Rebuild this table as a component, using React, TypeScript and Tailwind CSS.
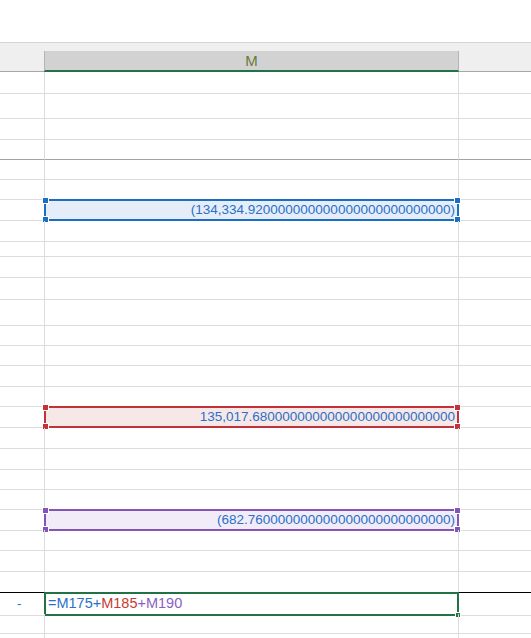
import React from "react";

type Sel = "blue" | "red" | "purple" | "active";

type Row = {
  bottom: number;
  sel?: Sel;
  text?: string;
  dark?: boolean;
  blackEdge?: boolean;
  dash?: boolean;
};

const Z = "0000000000000000000000000";

const ROWS: Row[] = [
  { bottom: 93 },
  { bottom: 118 },
  { bottom: 139 },
  { bottom: 159, dark: true },
  { bottom: 179 },
  { bottom: 199 },
  { bottom: 220, sel: "blue", text: "(134,334.92" + Z + ")" },
  { bottom: 241 },
  { bottom: 256 },
  { bottom: 277 },
  { bottom: 299 },
  { bottom: 325 },
  { bottom: 345 },
  { bottom: 365 },
  { bottom: 386 },
  { bottom: 406 },
  { bottom: 427, sel: "red", text: "135,017.68" + Z },
  { bottom: 448 },
  { bottom: 469 },
  { bottom: 489 },
  { bottom: 509 },
  { bottom: 529, sel: "purple", text: "(682.76" + Z + ")" },
  { bottom: 550 },
  { bottom: 571 },
  { bottom: 592, blackEdge: true },
  { bottom: 613, sel: "active", dash: true },
  { bottom: 633 },
  { bottom: 638 },
];

const SEL_STYLE: Record<Sel, { fill: string; box: string; handle: string }> = {
  blue: { fill: "bg-[#e5eef8]", box: "border-[#1b6ec2]", handle: "bg-[#1b6ec2]" },
  red: { fill: "bg-[#f7e8e8]", box: "border-[#c2323b]", handle: "bg-[#c2323b]" },
  purple: { fill: "bg-[#f1ecf7]", box: "border-[#8156b6]", handle: "bg-[#8156b6]" },
  active: { fill: "bg-white", box: "border-[#217346]", handle: "bg-[#217346]" },
};

function Handle({ pos, color }: { pos: string; color: string }) {
  return <span className={`absolute w-[7px] h-[7px] border border-white ${color} ${pos}`} />;
}

function Selection({ kind }: { kind: Sel }) {
  const s = SEL_STYLE[kind];
  if (kind === "active") {
    return (
      <div className={`absolute -top-px -bottom-px -left-px -right-px border-2 ${s.box}`}>
        <span className={`absolute -right-[4px] -bottom-[4px] w-[6px] h-[6px] border border-white ${s.handle}`} />
      </div>
    );
  }
  return (
    <div className={`absolute -top-px -bottom-px -left-px -right-px border-2 ${s.box}`}>
      <Handle pos="-left-[4px] -top-[4px]" color={s.handle} />
      <Handle pos="-right-[4px] -top-[4px]" color={s.handle} />
      <Handle pos="-left-[4px] -bottom-[4px]" color={s.handle} />
      <Handle pos="-right-[4px] -bottom-[4px]" color={s.handle} />
    </div>
  );
}

export default function App() {
  let prev = 71;
  return (
    <div className="w-[531px] h-[638px] overflow-hidden bg-white text-[13.5px] text-[#2a70c8]" style={{ fontFamily: '"Liberation Sans", Arial, sans-serif' }}>
      <div className="h-[42px]" />

      {/* column headers */}
      <div className="h-[30px] bg-[#efefef] border-t border-b border-t-[#d4d4d4] border-b-[#a6a6a6] grid grid-cols-[44px_415px_1fr]">
        <div />
        <div className="mt-[8px] h-[21px] -mb-px bg-[#d2d2d2] border-x border-[#b4b4b4] border-b-2 border-b-[#217346] flex items-center justify-center pt-px text-[15px] text-[#6a7a38]">
          M
        </div>
        <div />
      </div>

      {ROWS.map((r, i) => {
        const h = r.bottom - prev;
        prev = r.bottom;
        const line = r.dark ? "border-b-[#a3a3a3]" : "border-b-[#dcdcdc]";
        const edge = r.blackEdge ? "border-b-black" : line;
        const s = r.sel ? SEL_STYLE[r.sel] : null;
        return (
          <div key={i} className="grid grid-cols-[44px_415px_1fr]" style={{ height: h }}>
            <div className={`border-b ${edge} flex items-center pl-[17px]`}>{r.dash ? "-" : null}</div>
            <div className={`relative border-b border-x border-x-[#dcdcdc] ${line} ${s ? s.fill : ""}`}>
              {r.sel === "active" ? (
                <div className="h-full flex items-center pl-[3px] whitespace-nowrap text-[14.5px]">
                  <span className="text-[#2a70c8]">=M175+</span>
                  <span className="text-[#c53a33]">M185</span>
                  <span className="text-[#8a5fbf]">+M190</span>
                </div>
              ) : r.text ? (
                <div className="h-full flex items-center justify-end pr-[3px] whitespace-nowrap">{r.text}</div>
              ) : null}
              {r.sel ? <Selection kind={r.sel} /> : null}
            </div>
            <div className={`border-b ${edge}`} />
          </div>
        );
      })}
    </div>
  );
}
